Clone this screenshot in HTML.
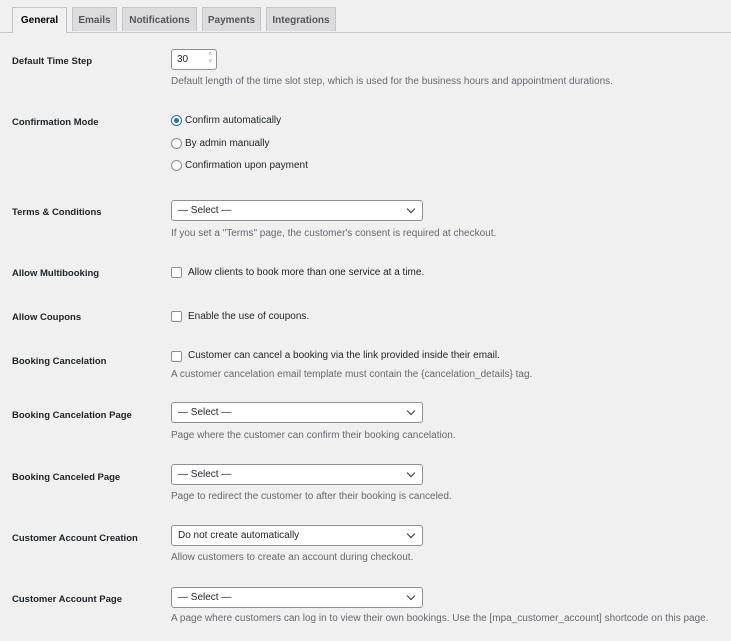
<!DOCTYPE html><html><head><style>
body{margin:0;width:731px;height:641px;background:#f0f0f1;font-family:"Liberation Sans",sans-serif;font-size:10px;color:#1d2327;position:relative;overflow:hidden}
.a{position:absolute;white-space:nowrap}
.tab{position:absolute;top:7px;height:24px;border:1px solid #c3c4c7;border-bottom:none;background:#dcdcde;color:#50575e;font-weight:bold;font-size:10px;line-height:25px;text-align:center;box-sizing:border-box}
.tab.on{background:#f0f0f1;color:#000;height:26px}
.lbl{font-weight:bold;font-size:9.5px}
.desc{color:#646970;font-size:10px}
.sel{position:absolute;left:171px;width:252px;height:21px;border:1px solid #8c8f94;border-radius:3px;background:#fff;box-sizing:border-box;padding-left:6px;line-height:20px;font-size:10px}
.sel:after{content:"";position:absolute;right:8px;top:5px;width:5px;height:5px;border-right:1.3px solid #2c3338;border-bottom:1.3px solid #2c3338;transform:rotate(45deg)}
.rad{position:absolute;left:171px;width:11px;height:11px;border:1px solid #8c8f94;border-radius:50%;background:#fff;box-sizing:border-box}
.chk{position:absolute;left:171px;width:11px;height:11px;border:1px solid #8c8f94;border-radius:2px;background:#fff;box-sizing:border-box}
</style></head><body>
<div class="a" style="left:0;top:32px;width:731px;border-top:1px solid #c3c4c7"></div>
<div class="tab on" style="left:12px;width:55px">General</div>
<div class="tab" style="left:72px;width:45px">Emails</div>
<div class="tab" style="left:122px;width:75px">Notifications</div>
<div class="tab" style="left:202px;width:59px">Payments</div>
<div class="tab" style="left:266px;width:70px">Integrations</div>

<div class="a lbl" style="left:12px;top:56px">Default Time Step</div>
<div class="a" style="left:171px;top:49px;width:46px;height:21px;border:1px solid #8c8f94;border-radius:3px;background:#fff;box-sizing:border-box;padding-left:5px;line-height:20px">30<span style="position:absolute;right:4px;top:2px;font-size:6px;line-height:7px;color:#888">˄<br>˅</span></div>
<div class="a desc" style="left:171px;top:76px">Default length of the time slot step, which is used for the business hours and appointment durations.</div>

<div class="a lbl" style="left:12px;top:117px">Confirmation Mode</div>
<div class="rad" style="top:115px;border-color:#2271b1"><div style="position:absolute;left:2px;top:2px;width:5px;height:5px;border-radius:50%;background:#2271b1"></div></div>
<div class="a" style="left:185px;top:115px">Confirm automatically</div>
<div class="rad" style="top:138px"></div><div class="a" style="left:185px;top:138px">By admin manually</div>
<div class="rad" style="top:160px"></div><div class="a" style="left:185px;top:160px">Confirmation upon payment</div>

<div class="a lbl" style="left:12px;top:207px">Terms &amp; Conditions</div>
<div class="sel" style="top:200px">— Select —</div>
<div class="a desc" style="left:171px;top:228px">If you set a "Terms" page, the customer's consent is required at checkout.</div>

<div class="a lbl" style="left:12px;top:268px">Allow Multibooking</div>
<div class="chk" style="top:267px"></div><div class="a" style="left:188px;top:267px">Allow clients to book more than one service at a time.</div>

<div class="a lbl" style="left:12px;top:312px">Allow Coupons</div>
<div class="chk" style="top:311px"></div><div class="a" style="left:188px;top:311px">Enable the use of coupons.</div>

<div class="a lbl" style="left:12px;top:356px">Booking Cancelation</div>
<div class="chk" style="top:351px"></div><div class="a" style="left:188px;top:350px">Customer can cancel a booking via the link provided inside their email.</div>
<div class="a desc" style="left:171px;top:369px">A customer cancelation email template must contain the {cancelation_details} tag.</div>

<div class="a lbl" style="left:12px;top:410px">Booking Cancelation Page</div>
<div class="sel" style="top:402px">— Select —</div>
<div class="a desc" style="left:171px;top:430px">Page where the customer can confirm their booking cancelation.</div>

<div class="a lbl" style="left:12px;top:472px">Booking Canceled Page</div>
<div class="sel" style="top:464px">— Select —</div>
<div class="a desc" style="left:171px;top:491px">Page to redirect the customer to after their booking is canceled.</div>

<div class="a lbl" style="left:12px;top:533px">Customer Account Creation</div>
<div class="sel" style="top:525px">Do not create automatically</div>
<div class="a desc" style="left:171px;top:552px">Allow customers to create an account during checkout.</div>

<div class="a lbl" style="left:12px;top:594px">Customer Account Page</div>
<div class="sel" style="top:587px">— Select —</div>
<div class="a desc" style="left:171px;top:613px">A page where customers can log in to view their own bookings. Use the [mpa_customer_account] shortcode on this page.</div>
</body></html>
